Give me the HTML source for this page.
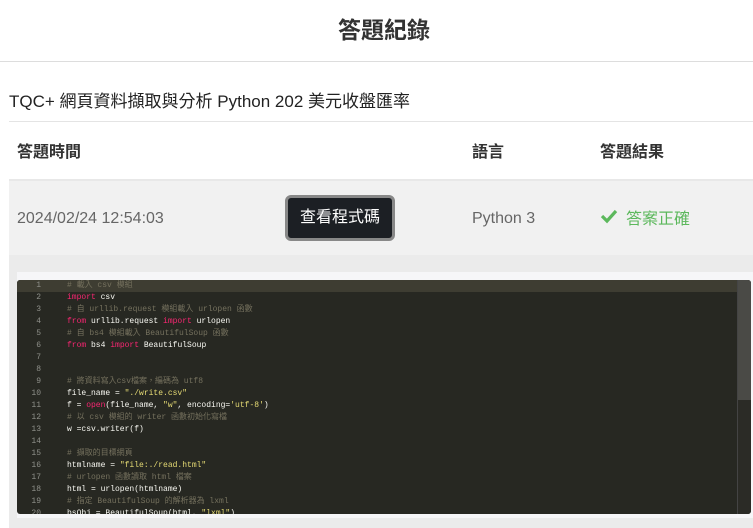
<!DOCTYPE html>
<html><head><meta charset="utf-8"><style>
*{margin:0;padding:0;box-sizing:border-box}
body{width:753px;height:528px;overflow:hidden;background:#fff;font-family:"Liberation Sans","Noto Sans CJK TC",sans-serif;position:relative;color:#222}
.abs{position:absolute}
.title{left:0;width:768px;top:11px;text-align:center;font-size:23px;font-weight:bold;color:#333}
.code{font-family:"Liberation Mono","Noto Sans CJK TC",monospace;font-size:8px;line-height:12px;white-space:pre}
.c{color:#75715e}.k{color:#f92672}.s{color:#e6db74}.n{color:#f8f8f2}
</style></head><body>
<div class="abs title">答題紀錄</div>
<div class="abs" style="left:0;top:61px;width:753px;height:1px;background:#ddd"></div>
<div class="abs" style="left:9px;top:87px;font-size:17px;color:#222">TQC+ 網頁資料擷取與分析 Python 202 美元收盤匯率</div>
<div class="abs" style="left:9px;top:121px;width:744px;height:1px;background:#e4e4e4"></div>
<div class="abs" style="left:17px;top:138px;font-size:16px;font-weight:bold;color:#333">答題時間</div>
<div class="abs" style="left:472px;top:138px;font-size:16px;font-weight:bold;color:#333">語言</div>
<div class="abs" style="left:600px;top:138px;font-size:16px;font-weight:bold;color:#333">答題結果</div>
<div class="abs" style="left:9px;top:179px;width:744px;height:2px;background:#e8e8e8"></div>
<div class="abs" style="left:9px;top:181px;width:744px;height:74px;background:#f1f1f1"></div>
<div class="abs" style="left:17px;top:210px;font-size:16px;color:#666">2024/02/24 12:54:03</div>
<div class="abs" style="left:285px;top:195px;width:110px;height:46px;background:#1c1f24;border:3px solid #888;border-radius:6px;color:#fff;font-size:16px;text-align:center;line-height:40px">查看程式碼</div>
<div class="abs" style="left:472px;top:210px;font-size:16px;color:#666">Python 3</div>
<svg class="abs" style="left:600px;top:208px" width="18" height="16" viewBox="0 0 18 16"><path d="M2 8 L7 13 L16 3" fill="none" stroke="#5cb85c" stroke-width="3.2"/></svg>
<div class="abs" style="left:626px;top:205px;font-size:16px;color:#5cb85c">答案正確</div>
<div class="abs" style="left:9px;top:255px;width:744px;height:273px;background:#ebebeb"></div>
<div class="abs" style="left:17px;top:272px;width:736px;height:246px;background:#f6f6f8"></div>
<div class="abs" style="left:17px;top:280px;width:734px;height:234px;background:#272822;border-radius:3px;overflow:hidden">
 <div class="abs" style="left:0;top:0;width:720px;height:12px;background:#3e3d32"></div>
 <div class="abs code" style="left:0;top:0;width:24px;text-align:right;color:#8f908a">1
2
3
4
5
6
7
8
9
10
11
12
13
14
15
16
17
18
19
20</div>
 <div class="abs code n" style="left:50px;top:0"><span class="c"># 載入 csv 模組</span>
<span class="k">import</span> csv
<span class="c"># 自 urllib.request 模組載入 urlopen 函數</span>
<span class="k">from</span> urllib.request <span class="k">import</span> urlopen
<span class="c"># 自 bs4 模組載入 BeautifulSoup 函數</span>
<span class="k">from</span> bs4 <span class="k">import</span> BeautifulSoup


<span class="c"># 將資料寫入csv檔案，編碼為 utf8</span>
file_name = <span class="s">"./write.csv"</span>
f = <span class="k">open</span>(file_name, <span class="s">"w"</span>, encoding=<span class="s">'utf-8'</span>)
<span class="c"># 以 csv 模組的 writer 函數初始化寫檔</span>
w =csv.writer(f)

<span class="c"># 擷取的目標網頁</span>
htmlname = <span class="s">"file:./read.html"</span>
<span class="c"># urlopen 函數讀取 html 檔案</span>
html = urlopen(htmlname)
<span class="c"># 指定 BeautifulSoup 的解析器為 lxml</span>
bsObj = BeautifulSoup(html, <span class="s">"lxml"</span>)</div>
 <div class="abs" style="left:720px;top:0;width:14px;height:234px;background:#2b2b26;border-left:1px solid #444"></div>
 <div class="abs" style="left:721px;top:0;width:13px;height:120px;background:#4a4a46"></div>
</div>
</body></html>
